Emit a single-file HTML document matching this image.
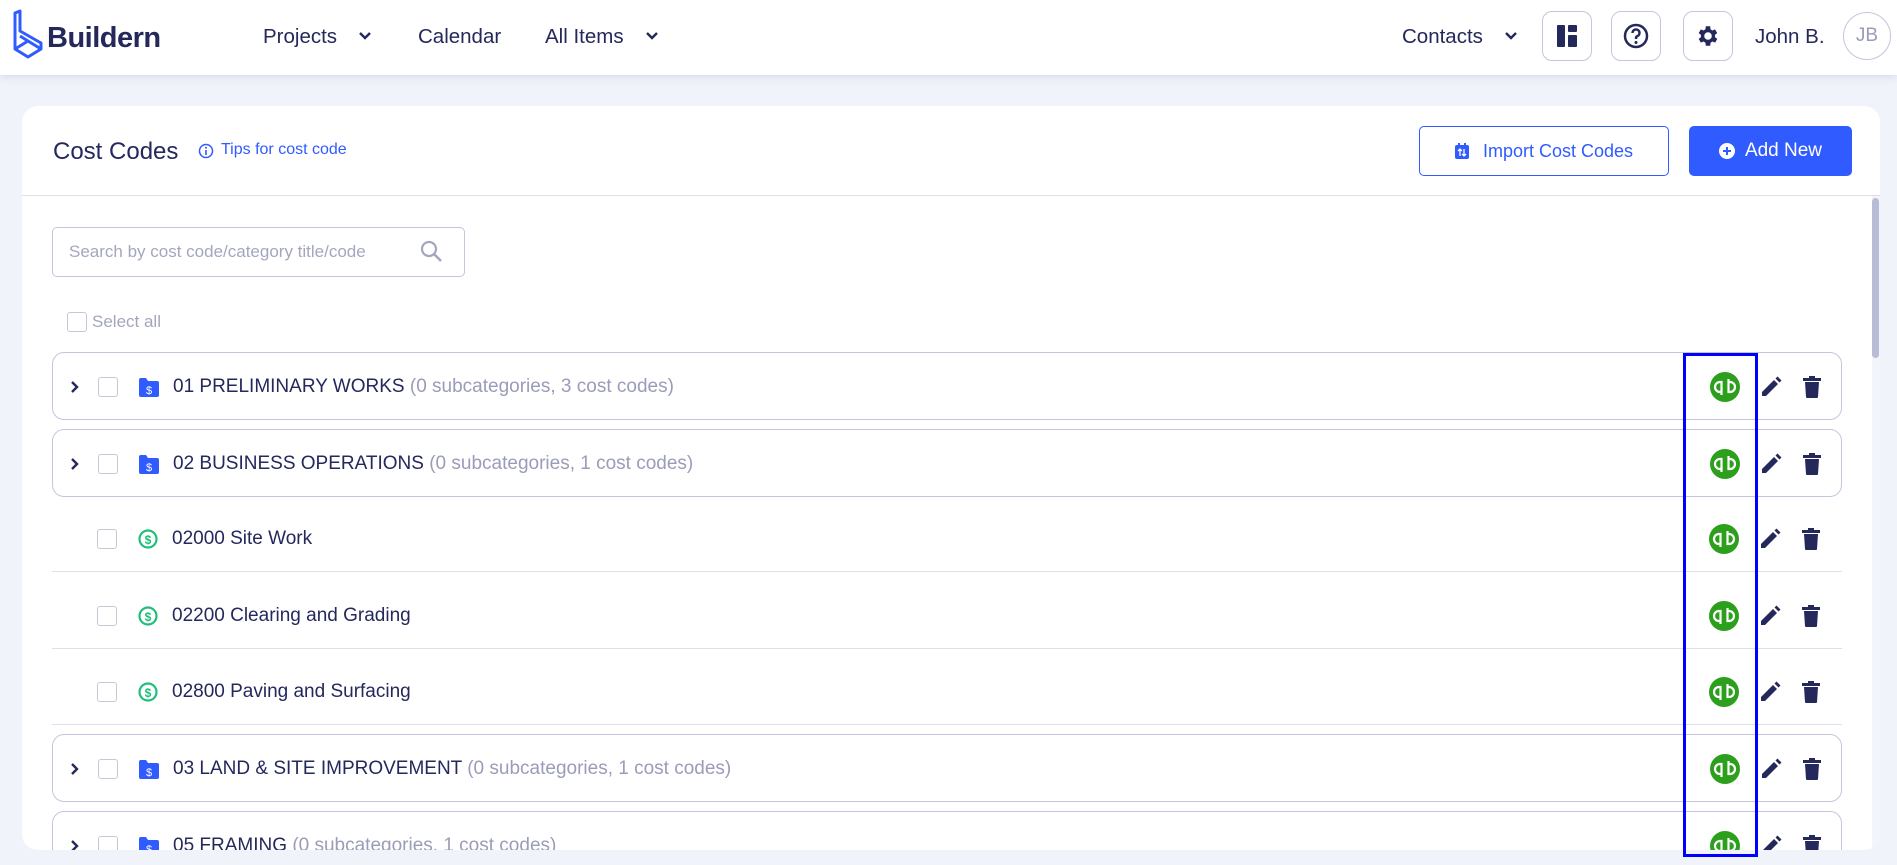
<!DOCTYPE html>
<html><head><meta charset="utf-8"><style>
*{box-sizing:border-box;margin:0;padding:0}
body{width:1897px;height:865px;overflow:hidden;background:#f0f3fa;font-family:"Liberation Sans",sans-serif;color:#24285b;position:relative}
.hdr{position:absolute;left:0;top:0;width:1897px;height:75px;background:#fff;box-shadow:0 2px 8px rgba(40,50,100,.12)}
.abs{position:absolute}
.nav{font-size:20.5px;color:#24285b;top:25px}
.ib{position:absolute;top:11px;width:50px;height:50px;border:1px solid #c3c6dc;border-radius:10px;display:flex;align-items:center;justify-content:center}
.card{position:absolute;left:22px;top:106px;width:1858px;height:744px;background:#fff;border-radius:16px;overflow:hidden}
.row{position:absolute;left:30px;width:1790px;height:68px;border:1px solid #c3c6dc;border-radius:12px}
.plain{position:absolute;left:30px;width:1790px;height:76px;border-bottom:1px solid #dcdeea}
.in{position:absolute;left:0;right:0;top:2px;bottom:0}
.plain .in{top:11px}
.t{position:absolute;left:120px;top:50%;transform:translateY(-50%);font-size:19px;white-space:nowrap;color:#24285b}
.t span{color:#9a9cb8}
.cb{position:absolute;left:45px;top:50%;margin-top:-10px;width:20px;height:20px;border:1.5px solid #c6c8d6;border-radius:3px}
.chev{position:absolute;left:17px;top:50%;margin-top:-8px}
.ic{position:absolute;left:86px;top:50%;margin-top:-10px}
.qb{position:absolute;left:1657px;top:50%;margin-top:-15px}
.pen{position:absolute;left:1706px;top:50%;margin-top:-12px}
.tr{position:absolute;left:1749px;top:50%;margin-top:-12px}
</style></head><body>
<div class="hdr">
 <svg class="abs" style="left:12px;top:9px" width="32" height="50" viewBox="0 0 32 50"><path d="M3 4 L8 2 L8 22 L29 34 L29 40 L16 48 L3 40 Z M3 40 L16 32 L29 40 M16 32 L8 27" fill="none" stroke="#2f5bff" stroke-width="3" stroke-linejoin="round"/></svg>
 <div class="abs" style="left:47px;top:22px;font-size:29px;font-weight:bold;color:#24285b;letter-spacing:-0.5px">Buildern</div>
 <div class="abs nav" style="left:263px">Projects</div>
 <svg class="abs" style="left:358px;top:31px" width="14" height="10"><path d="M2 2 L7 7 L12 2" fill="none" stroke="#24285b" stroke-width="2.4"/></svg>
 <div class="abs nav" style="left:418px">Calendar</div>
 <div class="abs nav" style="left:545px">All Items</div>
 <svg class="abs" style="left:645px;top:31px" width="14" height="10"><path d="M2 2 L7 7 L12 2" fill="none" stroke="#24285b" stroke-width="2.4"/></svg>
 <div class="abs nav" style="left:1402px">Contacts</div>
 <svg class="abs" style="left:1504px;top:31px" width="14" height="10"><path d="M2 2 L7 7 L12 2" fill="none" stroke="#24285b" stroke-width="2.4"/></svg>
 <div class="ib" style="left:1542px"><svg width="20" height="22"><rect x="0" y="0" width="8" height="22" rx="1" fill="#24285b"/><rect x="11" y="0" width="9" height="7" rx="1" fill="#24285b"/><rect x="11" y="10" width="9" height="12" rx="1" fill="#24285b"/></svg></div>
 <div class="ib" style="left:1611px"><svg width="26" height="26" viewBox="0 0 26 26"><circle cx="13" cy="13" r="11" fill="none" stroke="#24285b" stroke-width="2.5"/><path d="M9.5 10 A3.5 3.5 0 1 1 14 13.3 C13 13.8 13 14.5 13 16" fill="none" stroke="#24285b" stroke-width="2.5"/><circle cx="13" cy="19.5" r="1.5" fill="#24285b"/></svg></div>
 <div class="ib" style="left:1683px"><svg width="26" height="26" viewBox="0 0 24 24"><path fill="#24285b" d="M19.4 13a7.5 7.5 0 0 0 0-2l2.1-1.6-2-3.5-2.5 1a7 7 0 0 0-1.7-1L15 3h-4l-.4 2.9a7 7 0 0 0-1.7 1l-2.5-1-2 3.5L6.5 11a7.5 7.5 0 0 0 0 2l-2.1 1.6 2 3.5 2.5-1a7 7 0 0 0 1.7 1L11 21h4l.4-2.9a7 7 0 0 0 1.7-1l2.5 1 2-3.5zM13 15.5a3.5 3.5 0 1 1 0-7 3.5 3.5 0 0 1 0 7z" transform="translate(-1 0)"/></svg></div>
 <div class="abs nav" style="left:1755px">John B.</div>
 <div class="abs" style="left:1843px;top:12px;width:48px;height:48px;border:1px solid #c3c6dc;border-radius:50%;display:flex;align-items:center;justify-content:center;color:#9a9cb8;font-size:19px">JB</div>
</div>

<div class="card">
 <div class="abs" style="left:31px;top:32px;font-size:24px;color:#24285b">Cost Codes</div>
 <svg class="abs" style="left:176px;top:37px" width="16" height="16"><circle cx="8" cy="8" r="6.5" fill="none" stroke="#2f5bff" stroke-width="1.5"/><rect x="7.2" y="7" width="1.6" height="5" fill="#2f5bff"/><circle cx="8" cy="4.8" r="1" fill="#2f5bff"/></svg>
 <div class="abs" style="left:199px;top:35px;font-size:16px;color:#2f5bff">Tips for cost code</div>
 <div class="abs" style="left:1397px;top:20px;width:250px;height:50px;border:1.5px solid #2f5bff;border-radius:5px;display:flex;align-items:center;justify-content:center;color:#2f5bff;font-size:18px"><svg width="14" height="16" style="margin-right:14px"><rect x="0" y="2" width="14" height="14" rx="2" fill="#2f5bff"/><rect x="3" y="0" width="2" height="4" fill="#2f5bff"/><rect x="9" y="0" width="2" height="4" fill="#2f5bff"/><path d="M5 13V6M3 8l2-2 2 2M9 6v7M7 11l2 2 2-2" stroke="#fff" stroke-width="1.3" fill="none"/></svg>Import Cost Codes</div>
 <div class="abs" style="left:1667px;top:20px;width:163px;height:50px;background:#2f5bff;border-radius:5px;display:flex;align-items:center;justify-content:center;color:#fff;font-size:19px"><svg width="16" height="16" style="margin-right:10px"><circle cx="8" cy="8" r="8" fill="#fff"/><path d="M8 4v8M4 8h8" stroke="#2f5bff" stroke-width="2"/></svg>Add New</div>
 <div class="abs" style="left:0;top:89px;width:1858px;height:1px;background:#dcdeea"></div>
 <div class="abs" style="left:1850px;top:90px;width:8px;height:654px;background:#f4f5fa"></div>
 <div class="abs" style="left:1850px;top:92px;width:7px;height:160px;background:#b9bdd4;border-radius:4px"></div>
 <div class="abs" style="left:30px;top:121px;width:413px;height:50px;border:1px solid #c3c6dc;border-radius:5px"></div>
 <div class="abs" style="left:47px;top:136px;font-size:17px;color:#a4a6bf">Search by cost code/category title/code</div>
 <svg class="abs" style="left:397px;top:133px" width="24" height="24"><circle cx="10" cy="10" r="7" fill="none" stroke="#a4a6bf" stroke-width="2.2"/><path d="M15 15 L22 22" stroke="#a4a6bf" stroke-width="2.5"/></svg>
 <div class="abs" style="left:45px;top:206px;width:20px;height:20px;border:1.5px solid #c6c8d6;border-radius:3px"></div>
 <div class="abs" style="left:70px;top:206px;font-size:17px;color:#a4a6bf">Select all</div>

 <div id="rows"></div>
</div>
<div class="abs" style="left:1683px;top:353px;width:75px;height:504px;border:3px solid #0000ff"></div>
<script>
const chev='<svg class="chev" width="10" height="16"><path d="M2 3 L7 8 L2 13" fill="none" stroke="#24285b" stroke-width="2.4"/></svg>';
const fold='<svg class="ic" width="20" height="20"><path d="M0 3 Q0 1 2 1 H7 L9 4 H18 Q20 4 20 6 V18 Q20 20 18 20 H2 Q0 20 0 18Z" fill="#2f5bff"/><text x="10" y="17" font-size="11" fill="#fff" text-anchor="middle" font-family="Liberation Sans">$</text></svg>';
const dol='<svg class="ic" width="20" height="20"><circle cx="10" cy="10" r="8.5" fill="none" stroke="#1fbf7a" stroke-width="2.2"/><text x="10" y="15" font-size="12" font-weight="bold" fill="#1fbf7a" text-anchor="middle" font-family="Liberation Sans">$</text></svg>';
const act='<svg class="qb" width="30" height="30" viewBox="0 0 30 30"><circle cx="15" cy="15" r="15" fill="#2ca01c"/><path d="M12 20h-2a5 5 0 0 1 0-10h1.5v13M18 10h2a5 5 0 0 1 0 10h-1.5V7" fill="none" stroke="#fff" stroke-width="2.2"/></svg><svg class="pen" width="24" height="24" viewBox="0 0 24 24"><path d="M3 21v-4L15 5l4 4L7 21zM16.5 3.5l2-2 4 4-2 2z" fill="#24285b"/></svg><svg class="tr" width="20" height="24" viewBox="0 0 20 24"><rect x="1" y="3" width="18" height="3" fill="#24285b"/><rect x="7" y="1" width="6" height="3" fill="#24285b"/><path d="M3 7h14l-1 15q0 1-1 1H5q-1 0-1-1z" fill="#24285b"/></svg>';
const data=[
['r',246,'01 PRELIMINARY WORKS','(0 subcategories, 3 cost codes)'],
['r',323,'02 BUSINESS OPERATIONS','(0 subcategories, 1 cost codes)'],
['p',390,'02000 Site Work'],
['p',467,'02200 Clearing and Grading'],
['p',543,'02800 Paving and Surfacing'],
['r',628,'03 LAND &amp; SITE IMPROVEMENT','(0 subcategories, 1 cost codes)'],
['r',705,'05 FRAMING','(0 subcategories, 1 cost codes)']];
let h='';
for(const d of data){
 if(d[0]=='r') h+=`<div class="row" style="top:${d[1]}px"><div class="in">${chev}<div class="cb"></div>${fold}<div class="t">${d[2]} <span>${d[3]}</span></div>${act}</div></div>`;
 else h+=`<div class="plain" style="top:${d[1]}px"><div class="in"><div class="cb"></div>${dol}<div class="t">${d[2]}</div>${act}</div></div>`;
}
document.getElementById('rows').innerHTML=h;
</script>
</body></html>
